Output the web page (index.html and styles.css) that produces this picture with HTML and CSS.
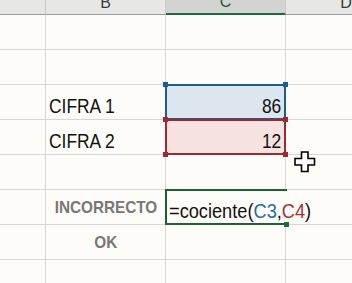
FILE: index.html
```html
<!DOCTYPE html>
<html>
<head>
<meta charset="utf-8">
<link rel="stylesheet" href="styles.css">
</head>
<body>
<div class="sheet">
  <div class="hdr"></div>
  <div class="hdr">B</div>
  <div class="hdr hdr-sel">C</div>
  <div class="hdr hdr-last">D</div>

  <div class="cell"></div><div class="cell"></div><div class="cell"></div><div class="cell last"></div>
  <div class="cell"></div><div class="cell"></div><div class="cell"></div><div class="cell last"></div>

  <div class="cell"></div>
  <div class="cell label"><span class="narrow">CIFRA 1</span></div>
  <div class="cell num ref ref-blue"><span class="box"><i class="h tl"></i><i class="h tr"></i></span><span class="narrow">86</span></div>
  <div class="cell last"></div>

  <div class="cell"></div>
  <div class="cell label"><span class="narrow">CIFRA 2</span></div>
  <div class="cell num ref ref-red"><span class="box"><i class="h tl"></i><i class="h tr"></i><i class="h bl"></i><i class="h br"></i></span><span class="narrow">12</span></div>
  <div class="cell last"></div>

  <div class="cell"></div><div class="cell"></div><div class="cell"></div><div class="cell last"></div>

  <div class="cell"></div>
  <div class="cell result"><span class="narrow">INCORRECTO</span></div>
  <div class="cell edit"><span class="editor"><span class="narrow">=cociente(<span class="c-blue">C3</span>,<span class="c-red">C4</span>)</span><i class="fill"></i></span></div>
  <div class="cell last"></div>

  <div class="cell"></div>
  <div class="cell result"><span class="narrow">OK</span></div>
  <div class="cell"></div>
  <div class="cell last"></div>

  <div class="cell"></div><div class="cell"></div><div class="cell"></div><div class="cell last"></div>

  <svg class="cursor" width="22" height="22" viewBox="0 0 22 22">
    <polygon points="7.5,1 14,1 14,7.5 20.5,7.5 20.5,14 14,14 14,20.5 7.5,20.5 7.5,14 1,14 1,7.5 7.5,7.5" fill="#fff" stroke="#000" stroke-width="1.6" stroke-linejoin="miter"/>
  </svg>
</div>
</body>
</html>
```
FILE: styles.css
```css
* { box-sizing: border-box; }
html, body { margin: 0; padding: 0; background: #fdfcf8; }
body { width: 352px; height: 283px; overflow: hidden; }

.sheet {
  position: relative;
  width: 352px;
  height: 283px;
  overflow: hidden;
  display: grid;
  grid-template-columns: 46px 120px 120px 120px;
  grid-template-rows: 15px repeat(8, 35px);
  background: #fdfcf8;
  font-family: "Liberation Sans", Arial, sans-serif;
}

.hdr {
  background: #e7e7e5;
  border-right: 1px solid #c9c9c7;
  border-bottom: 1px solid #9c9c9a;
  display: flex;
  align-items: flex-end;
  justify-content: center;
  overflow: hidden;
  font-size: 16px;
  line-height: 16px;
  padding-bottom: 3px;
  color: #3a3a3a;
}
.hdr-sel {
  background: #d3d3d1;
  color: #1f5a3a;
  border-bottom: 2px solid #1e6b40;
}
.hdr-last { border-right: none; }

.cell {
  position: relative;
  border-right: 1px solid #d6d6d4;
  border-bottom: 1px solid #d6d6d4;
  display: flex;
  align-items: flex-end;
  font-size: 20px;
  line-height: 20px;
  color: #111;
  white-space: nowrap;
}
.cell.last { border-right: none; }

.narrow {
  display: inline-block;
  transform: scaleX(0.87);
  transform-origin: left center;
  white-space: nowrap;
}

.label { padding: 0 0 3px 3px; }
.num { justify-content: flex-end; padding: 0 4px 3px 0; }
.num .narrow { transform-origin: right center; }

.ref-blue { background: #dce6ee; }
.ref-red { background: #f5e2e1; }
.ref .box {
  position: absolute;
  left: -1px; top: -1px; right: -1px; bottom: -1px;
  border: 2px solid;
}
.ref-blue .box { border-color: #1a5d92; z-index: 1; }
.ref-red .box { border-color: #a1282d; z-index: 2; }
.h {
  position: absolute;
  width: 5px; height: 5px;
}
.ref-blue .h { background: #1a5d92; }
.ref-red .h { background: #a1282d; }
.h.tl { left: -4px; top: -4px; }
.h.tr { right: -4px; top: -4px; }
.h.bl { left: -4px; bottom: -4px; }
.h.br { right: -4px; bottom: -4px; }

.result {
  justify-content: center;
  align-items: center;
  font-weight: bold;
  font-size: 17px;
  line-height: 17px;
  color: #777;
}
.result .narrow { transform: scaleX(0.9); transform-origin: center center; }

.edit { z-index: 3; }
.editor {
  position: absolute;
  left: -1px; top: -1px; bottom: -1px;
  width: 122px;
  border: 2px solid #1e5e3a;
  border-right: none;
  background: #fdfcf8;
  padding: 0 0 2px 2px;
  display: flex;
  align-items: flex-end;
  overflow: visible;
  white-space: nowrap;
  font-size: 20px;
  line-height: 20px;
  color: #111;
}
.editor .narrow { transform: scaleX(0.91); }
.c-blue { color: #2a6aa3; }
.c-red { color: #a3333a; }
.fill {
  position: absolute;
  right: -2px; bottom: -4px;
  width: 5px; height: 5px;
  background: #1e6b40;
}

.cursor {
  position: absolute;
  left: 294px;
  top: 151px;
  z-index: 5;
}
```
